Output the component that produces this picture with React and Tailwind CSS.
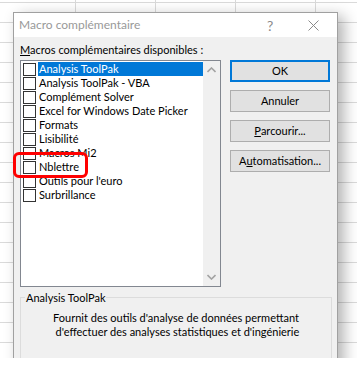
import React from 'react';

const items = [
  'Analysis ToolPak',
  'Analysis ToolPak - VBA',
  'Complément Solver',
  'Excel for Windows Date Picker',
  'Formats',
  'Lisibilité',
  'Macros Mi2',
  'Nblettre',
  "Outils pour l'euro",
  'Surbrillance',
];

const font = { fontFamily: 'Lato, "Noto Sans", "Liberation Sans", sans-serif' };

function Button({ children, primary }) {
  return (
    <div
      className={
        'h-[22px] w-[100px] flex items-center justify-center bg-[#e1e1e1] text-[11px] text-black ' +
        (primary ? 'border-2 border-[#0078d7]' : 'border border-[#adadad]')
      }
    >
      {children}
    </div>
  );
}

export default function App() {
  return (
    <div className="w-[357px] h-[384px] bg-white overflow-hidden" style={font}>
      {/* spreadsheet behind the dialog */}
      <div className="relative h-[358px] overflow-hidden bg-white bg-[linear-gradient(to_right,#dadada_1px,transparent_1px),linear-gradient(to_bottom,#dadada_1px,transparent_1px)] bg-size-[80px_20px] bg-position-[75px_2px] pt-[12px] pl-[13px]">
        <div className="w-[325px] h-[400px] border border-[#a0a0a0] bg-[#f0f0f0] shadow-[6px_4px_14px_rgba(0,0,0,0.3)]">
          {/* title bar */}
          <div className="h-[24px] bg-white flex items-center pl-[5px] text-[12px] text-[#999999]">
            <span className="w-[248px]">Macro complémentaire</span>
            <span className="text-[14px] text-[#8a8a8a]">?</span>
            <svg className="ml-[35px]" width="11" height="11" viewBox="0 0 11 11">
              <path d="M0.5 0.5 L10.5 10.5 M10.5 0.5 L0.5 10.5" stroke="#8a8a8a" strokeWidth="1" />
            </svg>
          </div>

          {/* body */}
          <div className="px-[6px] pt-[5px]">
            <div className="h-[15px] leading-[15px] text-[11px] text-black">
              <span className="underline">M</span>acros complémentaires disponibles :
            </div>
            <div className="mt-[3px] flex items-start">
              {/* list box */}
              <div className="w-[201px] h-[227px] border border-[#828790] bg-white flex">
                <div className="flex-1 pt-[1px] pl-[2px]">
                  {items.map((it, i) => (
                    <div key={it} className="h-[14px] flex items-center">
                      <div className="w-[13px] h-[13px] border border-[#333333] bg-white shrink-0" />
                      <div
                        className={
                          'ml-[2px] flex-1 h-[14px] pl-[1px] leading-[14px] text-[11px] whitespace-nowrap ' +
                          (i === 0 ? 'bg-[#0078d7] text-white' : 'text-black')
                        }
                      >
                        {it}
                      </div>
                    </div>
                  ))}
                </div>
                <div className="w-[17px] bg-[#f0f0f0] flex flex-col justify-between items-center py-[6px]">
                  <svg width="9" height="6" viewBox="0 0 9 6">
                    <path d="M0.5 5 L4.5 1 L8.5 5" fill="none" stroke="#a3a3a3" strokeWidth="1.6" />
                  </svg>
                  <svg width="9" height="6" viewBox="0 0 9 6">
                    <path d="M0.5 1 L4.5 5 L8.5 1" fill="none" stroke="#a3a3a3" strokeWidth="1.6" />
                  </svg>
                </div>
              </div>

              {/* buttons */}
              <div className="ml-[9px] flex flex-col gap-[8px]">
                <Button primary>OK</Button>
                <Button>Annuler</Button>
                <Button>
                  <span className="underline">P</span>arcourir...
                </Button>
                <Button>
                  A<span className="underline">u</span>tomatisation...
                </Button>
              </div>
            </div>

            {/* group box */}
            <div className="relative mt-[10px] w-[312px] h-[80px] border border-[#dcdcdc]">
              <div className="absolute left-[4px] -top-[8px] bg-[#f0f0f0] px-[1px] text-[11px] leading-[15px] text-black">
                Analysis ToolPak
              </div>
              <div className="pt-[13px] text-center text-[11px] leading-[14px] text-black">
                <div>Fournit des outils d'analyse de données permettant</div>
                <div>&nbsp;d'effectuer des analyses statistiques et d'ingénierie</div>
              </div>
            </div>
          </div>
        </div>

        {/* red annotation */}
        <div className="absolute left-[13px] top-[152px] w-[75px] h-[26px] border-[3px] border-[#ff0000] rounded-[6px]" />
      </div>
    </div>
  );
}
